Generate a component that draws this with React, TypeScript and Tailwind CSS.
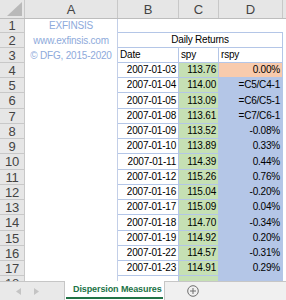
import React from "react";

type DataRow = { n: number; h: string; d: string; c: string; r: string; orange?: boolean };

const data: DataRow[] = [
  { n: 4, h: "h-[15px]", d: "2007-01-03", c: "113.76", r: "0.00%", orange: true },
  { n: 5, h: "h-[15px]", d: "2007-01-04", c: "114.00", r: "=C5/C4-1" },
  { n: 6, h: "h-[16px]", d: "2007-01-05", c: "113.09", r: "=C6/C5-1" },
  { n: 7, h: "h-[15px]", d: "2007-01-08", c: "113.61", r: "=C7/C6-1" },
  { n: 8, h: "h-[15px]", d: "2007-01-09", c: "113.52", r: "-0.08%" },
  { n: 9, h: "h-[15px]", d: "2007-01-10", c: "113.89", r: "0.33%" },
  { n: 10, h: "h-[16px]", d: "2007-01-11", c: "114.39", r: "0.44%" },
  { n: 11, h: "h-[15px]", d: "2007-01-12", c: "115.26", r: "0.76%" },
  { n: 12, h: "h-[15px]", d: "2007-01-16", c: "115.04", r: "-0.20%" },
  { n: 13, h: "h-[15px]", d: "2007-01-17", c: "115.09", r: "0.04%" },
  { n: 14, h: "h-[16px]", d: "2007-01-18", c: "114.70", r: "-0.34%" },
  { n: 15, h: "h-[15px]", d: "2007-01-19", c: "114.92", r: "0.20%" },
  { n: 16, h: "h-[15px]", d: "2007-01-22", c: "114.57", r: "-0.31%" },
  { n: 17, h: "h-[15px]", d: "2007-01-23", c: "114.91", r: "0.29%" },
];

function RowHead({ n }: { n: number | string }) {
  return (
    <div className="w-[25px] shrink-0 bg-[#e6e6e6] border-r border-b border-[#c8c8c8] flex items-center justify-center text-[13px] leading-none text-[#444]">
      {n}
    </div>
  );
}

function ACell({ children }: { children?: React.ReactNode }) {
  return (
    <div className="w-[93px] shrink-0 border-r border-[#c3cfe8] flex items-center justify-center text-[10px] leading-none text-[#8eaadb]">
      {children}
    </div>
  );
}

function ECell() {
  return <div className="w-[3px] shrink-0" />;
}

export default function App() {
  return (
    <div className="w-[286px] h-[300px] overflow-hidden bg-white font-['Liberation_Sans',Arial,sans-serif] text-black flex flex-col">
      {/* column header */}
      <div className="h-[19px] shrink-0 flex bg-[#e6e6e6] border-b border-[#bdbdbd] text-[13px] text-[#444] leading-none">
        <div className="w-[25px] shrink-0 border-r border-[#c8c8c8] flex items-end justify-end pr-[2px] pb-[2px]">
          <svg width="15" height="14" viewBox="0 0 15 14">
            <polygon points="15,0 15,14 0,14" fill="#b9b9b9" />
          </svg>
        </div>
        <div className="w-[93px] shrink-0 border-r border-[#c8c8c8] flex items-center justify-center">A</div>
        <div className="w-[61px] shrink-0 border-r border-[#c8c8c8] flex items-center justify-center">B</div>
        <div className="w-[40px] shrink-0 border-r border-[#c8c8c8] flex items-center justify-center">C</div>
        <div className="w-[64px] shrink-0 border-r border-[#c8c8c8] flex items-center justify-center">D</div>
        <div className="flex-1" />
      </div>

      {/* body */}
      <div className="h-[262px] shrink-0 overflow-hidden flex flex-col text-[10px] leading-none tracking-[-0.2px]">
        <div className="flex h-[14px] shrink-0">
          <RowHead n={1} />
          <ACell>EXFINSIS</ACell>
          <div className="w-[165px] shrink-0 border-b border-[#b4c6e7]" />
          <ECell />
        </div>
        <div className="flex h-[15px] shrink-0">
          <RowHead n={2} />
          <ACell>www.exfinsis.com</ACell>
          <div className="w-[165px] shrink-0 border-b border-r border-[#b4c6e7] flex items-center justify-center">
            Daily Returns
          </div>
          <ECell />
        </div>
        <div className="flex h-[15px] shrink-0">
          <RowHead n={3} />
          <ACell>© DFG, 2015-2020</ACell>
          <div className="w-[61px] shrink-0 border-b border-r border-[#b4c6e7] flex items-center pl-[2px]">Date</div>
          <div className="w-[40px] shrink-0 border-b border-r border-[#b4c6e7] flex items-center pl-[2px]">spy</div>
          <div className="w-[64px] shrink-0 border-b border-r border-[#b4c6e7] flex items-center pl-[2px]">rspy</div>
          <ECell />
        </div>
        {data.map((row) => (
          <div key={row.n} className={`flex shrink-0 ${row.h}`}>
            <RowHead n={row.n} />
            <ACell />
            <div className="w-[61px] shrink-0 border-b border-r border-[#b4c6e7] flex items-center justify-end pr-[2px]">
              {row.d}
            </div>
            <div className="w-[40px] shrink-0 bg-[#c6e0b4] border-b border-r border-[#b4c6e7] flex items-center justify-end pr-[2px]">
              {row.c}
            </div>
            <div
              className={`w-[64px] shrink-0 border-b border-r border-[#b4c6e7] flex items-center justify-end pr-[2px] ${
                row.orange ? "bg-[#f8cbad]" : "bg-[#b4c6e7]"
              }`}
            >
              {row.r}
            </div>
            <ECell />
          </div>
        ))}
        <div className="flex h-[15px] shrink-0">
          <RowHead n={18} />
          <ACell />
          <div className="w-[61px] shrink-0 border-b border-r border-[#b4c6e7]" />
          <div className="w-[40px] shrink-0 bg-[#c6e0b4] border-b border-r border-[#b4c6e7]" />
          <div className="w-[64px] shrink-0 bg-[#b4c6e7] border-b border-r border-[#b4c6e7]" />
          <ECell />
        </div>
      </div>

      {/* sheet tabs */}
      <div className="h-[19px] shrink-0 flex bg-[#f0f0f0] border-t border-[#c6c6c6]">
        <div className="w-[64px] shrink-0 bg-[#e9e9e9] flex items-center gap-[13px] pl-[16px]">
          <svg width="5" height="7" viewBox="0 0 5 7">
            <polygon points="5,0 5,7 0,3.5" fill="#c4c4c4" />
          </svg>
          <svg width="5" height="7" viewBox="0 0 5 7">
            <polygon points="0,0 0,7 5,3.5" fill="#c4c4c4" />
          </svg>
        </div>
        <div className="w-[101px] shrink-0 -mt-px bg-white border-x border-[#c6c6c6] flex flex-col">
          <div className="flex-1 flex items-center pl-[8px] text-[9px] font-bold tracking-[-0.1px] text-[#217346] leading-none whitespace-nowrap">
            Dispersion Measures
          </div>
          <div className="h-[2px] bg-[#217346] mx-[1px] mb-[1px]" />
        </div>
        <div className="flex items-center pl-[22px]">
          <svg width="12" height="12" viewBox="0 0 12 12">
            <circle cx="6" cy="6" r="5.3" fill="none" stroke="#6f6f6f" strokeWidth="1" />
            <line x1="6" y1="3" x2="6" y2="9" stroke="#6f6f6f" strokeWidth="1" />
            <line x1="3" y1="6" x2="9" y2="6" stroke="#6f6f6f" strokeWidth="1" />
          </svg>
        </div>
      </div>
    </div>
  );
}
